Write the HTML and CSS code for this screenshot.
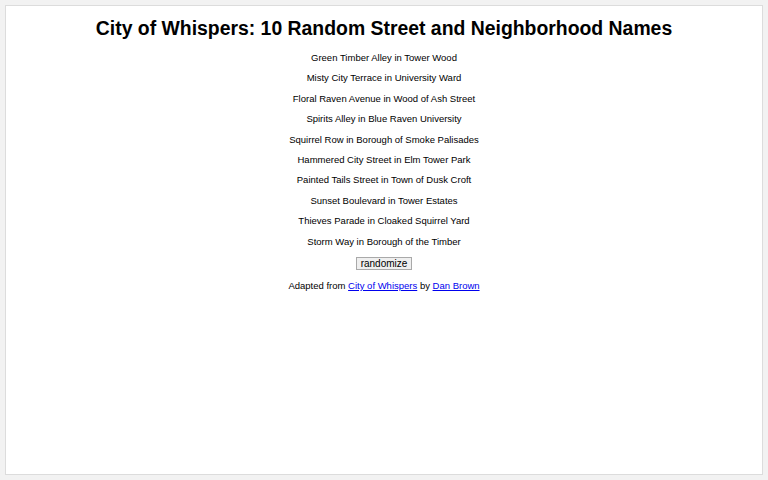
FILE: index.html
```html
<!DOCTYPE html>
<html lang="en">
<head>
    <meta charset="UTF-8">
    <meta name="viewport" content="width=device-width, initial-scale=1.0">
    <title>City of Whispers</title>
    <link rel="stylesheet" href="styles.css">
</head>
<body>
    <div class="page">
        <h1>City of Whispers: 10 Random Street and Neighborhood Names</h1>

        <div class="names">
            <p>Green Timber Alley in Tower Wood</p>
            <p>Misty City Terrace in University Ward</p>
            <p>Floral Raven Avenue in Wood of Ash Street</p>
            <p>Spirits Alley in Blue Raven University</p>
            <p>Squirrel Row in Borough of Smoke Palisades</p>
            <p>Hammered City Street in Elm Tower Park</p>
            <p>Painted Tails Street in Town of Dusk Croft</p>
            <p>Sunset Boulevard in Tower Estates</p>
            <p>Thieves Parade in Cloaked Squirrel Yard</p>
            <p>Storm Way in Borough of the Timber</p>
        </div>

        <button class="btn">randomize</button>

        <p class="credit">Adapted from <a href="#">City of Whispers</a> by <a href="#">Dan Brown</a></p>
    </div>
</body>
</html>
```

FILE: styles.css
```css
html, body {
    height: 100%;
}

body {
    margin: 0;
    padding: 5px;
    box-sizing: border-box;
    background: #f2f2f2;
    font-family: "Liberation Sans", Arial, sans-serif;
    color: #000;
}

.page {
    height: 100%;
    box-sizing: border-box;
    background: #fff;
    border: 1px solid #dcdcdc;
    text-align: center;
    padding-top: 11px;
}

h1 {
    font-size: 19.4px;
    margin: 0 0 8px;
}

.names p {
    font-size: 9.5px;
    margin: 0;
    line-height: 20.4px;
}

.btn {
    font-family: "Liberation Sans", Arial, sans-serif;
    font-size: 10px;
    margin-top: 5px;
    padding: 0 4px;
    background: #efefef;
    border: 1px solid #a9a9a9;
    border-radius: 0;
}

.credit {
    font-size: 9.5px;
    margin: 9px 0 0;
}

.credit a {
    color: #00e;
}
```
